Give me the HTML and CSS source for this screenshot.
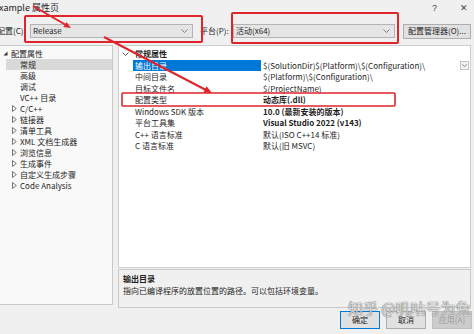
FILE: index.html
```html
<!DOCTYPE html>
<html lang="zh-CN">
<head>
  <meta charset="UTF-8">
  <title>xample 属性页</title>
  <link rel="stylesheet" href="styles.css">
</head>
<body>

<div class="dialog">
  <div class="titlebar">
    <span class="title">xample 属性页</span>
    <span class="help">?</span>
    <span class="close">✕</span>
  </div>

  <div class="configbar">
    <span class="lbl lbl-config">配置(C):</span>
    <div class="combo combo-config">
      <span>Release</span>
      <svg width="7" height="4" viewBox="0 0 7 4"><path d="M0.5 0.5 L3.5 3.5 L6.5 0.5" fill="none" stroke="#666" stroke-width="0.8"/></svg>
    </div>
    <span class="lbl lbl-platform">平台(P):</span>
    <div class="combo combo-platform">
      <span>活动(x64)</span>
      <svg width="7" height="4" viewBox="0 0 7 4"><path d="M0.5 0.5 L3.5 3.5 L6.5 0.5" fill="none" stroke="#666" stroke-width="0.8"/></svg>
    </div>
    <button class="btn btn-manager">配置管理器(O)...</button>
  </div>

  <div class="main">
    <div class="tree">
      <div class="tree-row root">
        <svg class="tw" width="5" height="5" viewBox="0 0 5 5"><polygon points="4.5,0.5 4.5,4.5 0.5,4.5" fill="#333"/></svg>
        <span>配置属性</span>
      </div>
      <div class="tree-row leaf sel"><span>常规</span></div>
      <div class="tree-row leaf"><span>高级</span></div>
      <div class="tree-row leaf"><span>调试</span></div>
      <div class="tree-row leaf"><span>VC++ 目录</span></div>
      <div class="tree-row node">
        <svg class="tw" width="5" height="7" viewBox="0 0 5 7"><polygon points="0.5,0.5 4.3,3.5 0.5,6.5" fill="none" stroke="#555" stroke-width="0.8"/></svg>
        <span>C/C++</span>
      </div>
      <div class="tree-row node">
        <svg class="tw" width="5" height="7" viewBox="0 0 5 7"><polygon points="0.5,0.5 4.3,3.5 0.5,6.5" fill="none" stroke="#555" stroke-width="0.8"/></svg>
        <span>链接器</span>
      </div>
      <div class="tree-row node">
        <svg class="tw" width="5" height="7" viewBox="0 0 5 7"><polygon points="0.5,0.5 4.3,3.5 0.5,6.5" fill="none" stroke="#555" stroke-width="0.8"/></svg>
        <span>清单工具</span>
      </div>
      <div class="tree-row node">
        <svg class="tw" width="5" height="7" viewBox="0 0 5 7"><polygon points="0.5,0.5 4.3,3.5 0.5,6.5" fill="none" stroke="#555" stroke-width="0.8"/></svg>
        <span>XML 文档生成器</span>
      </div>
      <div class="tree-row node">
        <svg class="tw" width="5" height="7" viewBox="0 0 5 7"><polygon points="0.5,0.5 4.3,3.5 0.5,6.5" fill="none" stroke="#555" stroke-width="0.8"/></svg>
        <span>浏览信息</span>
      </div>
      <div class="tree-row node">
        <svg class="tw" width="5" height="7" viewBox="0 0 5 7"><polygon points="0.5,0.5 4.3,3.5 0.5,6.5" fill="none" stroke="#555" stroke-width="0.8"/></svg>
        <span>生成事件</span>
      </div>
      <div class="tree-row node">
        <svg class="tw" width="5" height="7" viewBox="0 0 5 7"><polygon points="0.5,0.5 4.3,3.5 0.5,6.5" fill="none" stroke="#555" stroke-width="0.8"/></svg>
        <span>自定义生成步骤</span>
      </div>
      <div class="tree-row node">
        <svg class="tw" width="5" height="7" viewBox="0 0 5 7"><polygon points="0.5,0.5 4.3,3.5 0.5,6.5" fill="none" stroke="#555" stroke-width="0.8"/></svg>
        <span>Code Analysis</span>
      </div>
    </div>

    <div class="right">
      <div class="grid">
        <div class="grid-head">
          <svg class="caret" width="7" height="4" viewBox="0 0 7 4"><path d="M0.5 0.5 L3.5 3.5 L6.5 0.5" fill="none" stroke="#444" stroke-width="0.9"/></svg>
          <span>常规属性</span>
        </div>
        <div class="prop sel">
          <div class="pname">输出目录</div>
          <div class="pval">
            <span>$(SolutionDir)$(Platform)\$(Configuration)\</span>
            <span class="dd"><svg width="5" height="3" viewBox="0 0 5 3"><path d="M0.3 0.3 L2.5 2.5 L4.7 0.3" fill="none" stroke="#555" stroke-width="0.7"/></svg></span>
          </div>
        </div>
        <div class="prop">
          <div class="pname">中间目录</div>
          <div class="pval">$(Platform)\$(Configuration)\</div>
        </div>
        <div class="prop">
          <div class="pname">目标文件名</div>
          <div class="pval">$(ProjectName)</div>
        </div>
        <div class="prop">
          <div class="pname">配置类型</div>
          <div class="pval bold">动态库(.dll)</div>
        </div>
        <div class="prop">
          <div class="pname">Windows SDK 版本</div>
          <div class="pval bold">10.0 (最新安装的版本)</div>
        </div>
        <div class="prop">
          <div class="pname">平台工具集</div>
          <div class="pval bold">Visual Studio 2022 (v143)</div>
        </div>
        <div class="prop">
          <div class="pname">C++ 语言标准</div>
          <div class="pval">默认(ISO C++14 标准)</div>
        </div>
        <div class="prop">
          <div class="pname">C 语言标准</div>
          <div class="pval">默认(旧 MSVC)</div>
        </div>
      </div>
      <div class="desc">
        <div class="desc-title">输出目录</div>
        <div class="desc-text">指向已编译程序的放置位置的路径。可以包括环境变量。</div>
      </div>
    </div>
  </div>

  <div class="buttons">
    <button class="btn btn-ok">确定</button>
    <button class="btn">取消</button>
    <button class="btn btn-off">应用(A)</button>
  </div>
</div>

<!-- annotation marks drawn over the screenshot -->
<svg class="marks" width="474" height="334" viewBox="0 0 474 334">
  <rect x="25" y="16" width="177" height="26" rx="1" fill="none" stroke="#e0242c" stroke-width="2"/>
  <rect x="232" y="13" width="166" height="30" rx="1" fill="none" stroke="#e0242c" stroke-width="2"/>
  <rect x="122" y="93" width="273" height="13" rx="1" fill="none" stroke="#e0242c" stroke-width="1.6"/>
  <line x1="33" y1="6" x2="66" y2="25" stroke="#e0242c" stroke-width="2"/>
  <polygon points="71,28 66.4,21.9 63.4,27.1" fill="#e0242c"/>
  <line x1="104" y1="37" x2="206" y2="90" stroke="#e0242c" stroke-width="2"/>
  <polygon points="212,93 206.5,86.2 203.3,92.4" fill="#e0242c"/>
</svg>

<div class="watermark">知乎 @叽咕号为兔</div>

</body>
</html>
```

FILE: styles.css
```css
body {
  margin: 0;
  width: 474px;
  height: 334px;
  overflow: hidden;
  background: #f0f0f0;
  font-family: "Noto Sans CJK SC", "Noto Sans", sans-serif;
  font-size: 8px;
  color: #1e1e1e;
  position: relative;
}
.dialog {
  display: flex;
  flex-direction: column;
  height: 334px;
}
.titlebar {
  height: 20px;
  display: flex;
  align-items: flex-start;
  padding-top: 1px;
  box-sizing: border-box;
}
.title {
  margin-left: -1px;
  font-size: 9px;
  line-height: 14px;
  flex: 1;
}
.help {
  font-family: "Liberation Sans", sans-serif;
  font-size: 9px;
  line-height: 14px;
  color: #444;
  width: 28px;
}
.close {
  font-size: 9px;
  line-height: 14px;
  color: #444;
  width: 12px;
  margin-right: 2px;
}
.configbar {
  height: 22px;
  display: flex;
  align-items: center;
}
.lbl {
  line-height: 12px;
}
.lbl-config {
  margin-left: -3px;
  width: 33px;
}
.lbl-platform {
  width: 33px;
  padding-left: 7px;
}
.combo {
  height: 14px;
  box-sizing: border-box;
  background: #e5e5e5;
  border: 1px solid #b4b4b4;
  display: flex;
  align-items: center;
  justify-content: space-between;
  padding: 0 4px 0 2px;
  line-height: 12px;
}
.combo-config {
  width: 163px;
}
.combo-platform {
  width: 162px;
}
.btn {
  font-family: "Noto Sans CJK SC", "Noto Sans", sans-serif;
  font-size: 8px;
  color: #1e1e1e;
  background: #e1e1e1;
  border: 1px solid #adadad;
  padding: 0;
  line-height: 12px;
  box-sizing: border-box;
}
.btn-manager {
  margin-left: 8px;
  width: 68px;
  height: 15px;
}
.main {
  margin-top: 3px;
  height: 263px;
  display: flex;
  gap: 5px;
  align-items: flex-start;
}
.tree {
  margin-left: -1px;
  width: 114px;
  height: 260px;
  box-sizing: border-box;
  background: #f9f9f9;
  border: 1px solid #c9c9c9;
  padding-top: 2px;
}
.tree-row {
  height: 11px;
  line-height: 11px;
  display: flex;
  align-items: center;
  white-space: nowrap;
}
.tree-row.root {
  padding-left: 3px;
}
.tree-row.root .tw {
  margin-right: 3px;
}
.tree-row.leaf {
  padding-left: 20px;
}
.tree-row.node {
  padding-left: 12px;
}
.tree-row.node .tw {
  margin-right: 3px;
}
.tree-row.sel {
  background: #d9d9d9;
  margin-left: 6px;
  padding-left: 14px;
}
.right {
  width: 353px;
  display: flex;
  flex-direction: column;
}
.grid {
  height: 223px;
  box-sizing: border-box;
  background: #fff;
  border: 1px solid #cfcfcf;
  padding-top: 2px;
}
.grid-head {
  height: 11.5px;
  line-height: 11.5px;
  display: flex;
  align-items: center;
  padding-left: 3px;
  font-weight: bold;
}
.grid-head .caret {
  margin-right: 6px;
}
.prop {
  height: 11.5px;
  line-height: 11.5px;
  display: flex;
  white-space: nowrap;
}
.pname {
  margin-left: 14px;
  width: 128px;
  padding-left: 2px;
  box-sizing: border-box;
}
.prop.sel .pname {
  background: #0078d7;
  color: #fff;
}
.pval {
  margin-left: 2px;
  flex: 1;
  display: flex;
  justify-content: space-between;
  align-items: center;
  padding-right: 1px;
}
.pval.bold {
  font-weight: bold;
}
.dd {
  width: 9px;
  height: 9px;
  box-sizing: border-box;
  border: 1px solid #c4c4c4;
  background: #f2f2f2;
  display: flex;
  align-items: center;
  justify-content: center;
}
.desc {
  margin-top: 1px;
  height: 39px;
  box-sizing: border-box;
  background: #f0f0f0;
  border: 1px solid #c9c9c9;
  padding: 3px 4px;
}
.desc-title {
  font-weight: bold;
  line-height: 12px;
}
.desc-text {
  line-height: 12px;
}
.buttons {
  margin-top: 3px;
  display: flex;
  justify-content: flex-end;
  gap: 6px;
  padding-right: 2px;
}
.buttons .btn {
  width: 40px;
  height: 18px;
}
.btn-ok {
  border: 1px solid #0078d7;
}
.btn-off {
  background: #cccccc;
  border-color: #bfbfbf;
  color: #9a9a9a;
}
.marks {
  position: absolute;
  left: 0;
  top: 0;
  pointer-events: none;
}
.watermark {
  position: absolute;
  left: 348px;
  top: 298px;
  font-size: 15px;
  line-height: 20px;
  color: rgba(255, 255, 255, 0.75);
  text-shadow: 0 0 1px #666, 0 0 1px #666;
  white-space: nowrap;
  pointer-events: none;
}
```
